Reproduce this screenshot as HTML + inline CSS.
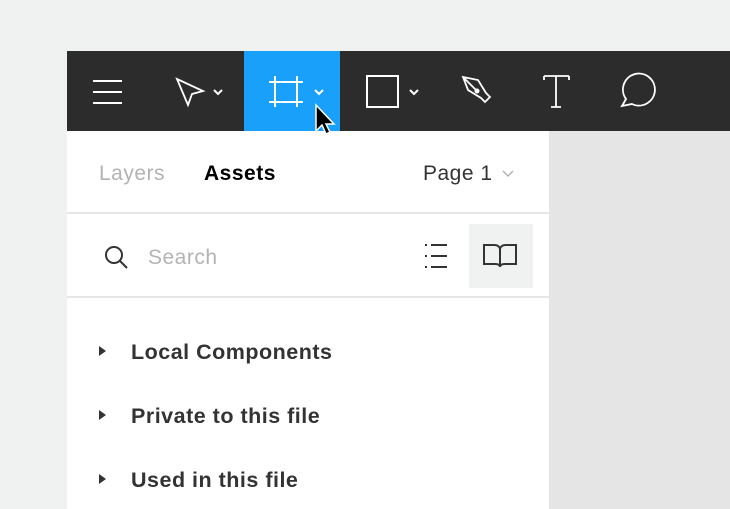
<!DOCTYPE html>
<html><head><style>
body{margin:0;width:730px;height:509px;background:#f0f1f1;position:relative;overflow:hidden;font-family:"Liberation Sans",sans-serif}
.tb{position:absolute;left:67px;top:51px;width:663px;height:80px;background:#2c2c2c}
.blue{position:absolute;left:244px;top:51px;width:96px;height:80px;background:#18a0fb}
.panel{position:absolute;left:67px;top:131px;width:482px;height:378px;background:#fff}
.canvas{position:absolute;left:549px;top:131px;width:181px;height:378px;background:#e5e5e5}
.t{position:absolute;font-size:21px;white-space:nowrap;letter-spacing:0.5px}
.hr{position:absolute;left:67px;width:482px;height:2px;background:#e6e6e6}
.tri{position:absolute;width:0;height:0;border-left:7px solid #333;border-top:5px solid transparent;border-bottom:5px solid transparent}
svg{position:absolute}
</style></head><body>
<div class="tb"></div><div class="blue"></div>
<div class="panel"></div><div class="canvas"></div>
<svg width="730" height="140" style="left:0;top:0" fill="none" stroke="#fff" stroke-width="2">
<path d="M93 81h29M93 92h29M93 103h29"/>
<path d="M177 79l26 12-11 3-4 11z" stroke-width="1.8"/>
<path d="M214 90l4 4 4-4"/>
<path d="M275 76v31M297 76v31M269 82h34M269 102h34"/>
<path d="M315 90l4 4 4-4"/>
<rect x="367" y="76" width="31" height="31"/>
<path d="M410 90l4 4 4-4"/>
<path d="M463 77l15 3 8 13 4 4-5 5-4-4-13-8z M463 77l13 13" stroke-width="1.8"/><circle cx="477" cy="91" r="1.5" fill="#fff"/>
<path d="M544 76h25M556 76v31M551 107h10M544 76v4M569 76v4" stroke-width="1.8"/>
<path d="M622 106l4-7a16 16 0 1 1 6 5z" stroke-width="1.8"/>
<path d="M316 105v26l6-6 4 9 4-2-4-8h8z" fill="#000" stroke="#fff" stroke-width="1.5"/>
</svg>
<div class="t" style="left:99px;top:162px;color:#b3b3b3">Layers</div>
<div class="t" style="left:204px;top:162px;color:#000;font-weight:bold">Assets</div>
<div class="t" style="left:423px;top:162px;color:#333">Page 1</div>
<svg width="20" height="20" style="left:500px;top:164px" fill="none" stroke="#b3b3b3" stroke-width="1.5"><path d="M3 7l5 5 5-5"/></svg>
<div class="hr" style="top:212px"></div>
<svg width="30" height="30" style="left:102px;top:243px" fill="none" stroke="#333" stroke-width="2"><circle cx="12" cy="12" r="8"/><path d="M18 18l7 7"/></svg>
<div class="t" style="left:148px;top:246px;color:#b3b3b3">Search</div>
<svg width="40" height="40" style="left:418px;top:236px" fill="none" stroke="#333" stroke-width="2"><path d="M7 9h2M13 9h16M7 20h2M13 20h16M7 31h2M13 31h16"/></svg>
<div style="position:absolute;left:469px;top:224px;width:64px;height:64px;background:#f0f1f1"></div>
<svg width="40" height="30" style="left:482px;top:241px" fill="none" stroke="#333" stroke-width="2"><path d="M2 4h10c4 0 6 2 6 5v17c0-2-2-3-5-3H2zM34 4H24c-4 0-6 2-6 5v17c0-2 2-3 5-3h11z"/></svg>
<div class="hr" style="top:296px"></div>
<div class="tri" style="left:99px;top:346px"></div>
<div class="t" style="left:131px;top:340px;color:#333;font-weight:bold;font-size:21.5px">Local Components</div>
<div class="tri" style="left:99px;top:410px"></div>
<div class="t" style="left:131px;top:404px;color:#333;font-weight:bold;font-size:21.5px">Private to this file</div>
<div class="tri" style="left:99px;top:474px"></div>
<div class="t" style="left:131px;top:468px;color:#333;font-weight:bold;font-size:21.5px">Used in this file</div>
</body></html>
